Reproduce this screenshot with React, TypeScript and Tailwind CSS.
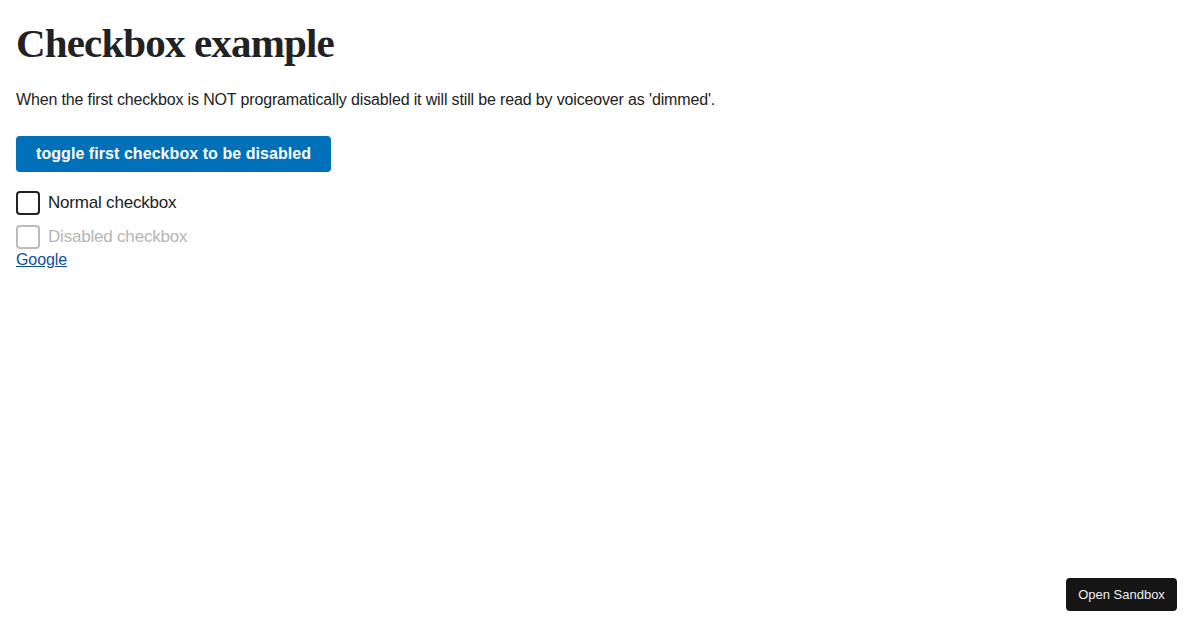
export default function App() {
  return (
    <div className="relative w-[1200px] h-[630px] bg-white text-[#222]" style={{ fontFamily: '"Liberation Sans", Arial, sans-serif' }}>
      <div className="px-4 pt-[19px]">
        <h1 className="text-[41px] leading-[48px] font-bold tracking-[-0.85px] text-[#222]" style={{ fontFamily: '"Liberation Serif", "Times New Roman", serif' }}>
          Checkbox example
        </h1>
        <p className="mt-[23px] text-[16px] leading-[20px] tracking-[-0.15px] text-[#222]">
          When the first checkbox is NOT programatically disabled it will still be read by voiceover as 'dimmed'.
        </p>
        <button className="mt-[26px] h-[36px] px-[20px] rounded-[4px] bg-[#0070b9] text-white text-[16px] font-bold tracking-[0.06px]">
          toggle first checkbox to be disabled
        </button>
        <div className="mt-[19px] flex flex-col">
          <label className="flex items-center gap-2 h-[24px]">
            <span className="w-[24px] h-[24px] rounded-[4px] border-2 border-[#222] box-border" />
            <span className="text-[17px] tracking-[-0.2px] text-[#222]">Normal checkbox</span>
          </label>
          <label className="mt-[10px] flex items-center gap-2 h-[24px]">
            <span className="w-[24px] h-[24px] rounded-[4px] border-2 border-[#bbb] box-border" />
            <span className="text-[17px] tracking-[-0.2px] text-[#b5b5b5]">Disabled checkbox</span>
          </label>
          <a href="#" className="text-[16px] leading-[20px] tracking-[-0.1px] text-[#0b4f9c] underline self-start mt-[1px]">Google</a>
        </div>
      </div>
      <div className="absolute right-[23px] bottom-[19px] w-[111px] h-[33px] rounded-[4px] bg-[#151515] text-[#eee] text-[13px] flex items-center justify-center">
        Open Sandbox
      </div>
    </div>
  );
}
